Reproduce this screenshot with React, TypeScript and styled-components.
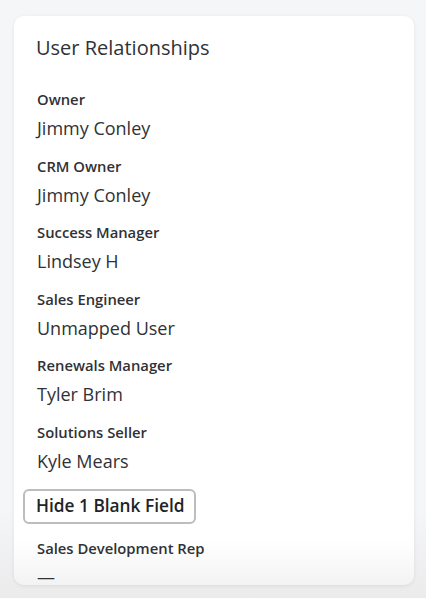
import React from 'react';
import styled, { createGlobalStyle } from 'styled-components';

const GlobalStyle = createGlobalStyle`
  html, body {
    margin: 0;
    padding: 0;
    background: #f4f5f7;
  }
  body {
    font-family: "Open Sans", Lato, Arial, sans-serif;
    color: #2f3033;
  }
`;

const Page = styled.div`
  width: 426px;
  height: 598px;
  padding: 16px 12px 13px 14px;
  box-sizing: border-box;
  background: linear-gradient(#f5f6f8 0%, #f5f6f8 85%, #ebebec 100%);
  overflow: hidden;
`;

const Card = styled.section`
  height: 100%;
  background: linear-gradient(#fff 0, #fff calc(100% - 44px), #f3f3f3 100%);
  border-radius: 10px;
  box-shadow: 0 1px 4px rgba(0, 0, 0, 0.08);
  padding: 20px 22px 0 22px;
  box-sizing: border-box;
  overflow: hidden;
`;

const Title = styled.h2`
  margin: 0 0 30px;
  font-size: 20px;
  font-weight: 400;
  line-height: 24px;
  color: #303236;
`;

const FieldList = styled.div`
  display: flex;
  flex-direction: column;
  gap: 16.5px;
`;

const Field = styled.div`
  display: flex;
  flex-direction: column;
  gap: 8px;
  padding-left: 1px;
`;

const Label = styled.div`
  font-size: 14.8px;
  font-weight: 600;
  line-height: 18px;
  color: #303236;
`;

const Value = styled.div<{ $tight?: boolean }>`
  font-size: 18px;
  line-height: ${(p) => (p.$tight ? '18px' : '24px')};
  margin-top: ${(p) => (p.$tight ? '3px' : '0')};
  color: #303236;
`;

const ToggleButton = styled.button`
  align-self: flex-start;
  margin: -0.5px 0 -1.5px -13px;
  width: 173px;
  height: 35px;
  padding: 0 0 0 11px;
  text-align: left;
  border: 2px solid #bdbdbd;
  border-radius: 6px;
  background: #fff;
  font-family: inherit;
  font-size: 17.3px;
  font-weight: 600;
  line-height: 20px;
  color: #222326;
  white-space: nowrap;
  cursor: pointer;
`;

const fields = [
  { label: 'Owner', value: 'Jimmy Conley' },
  { label: 'CRM Owner', value: 'Jimmy Conley' },
  { label: 'Success Manager', value: 'Lindsey H' },
  { label: 'Sales Engineer', value: 'Unmapped User' },
  { label: 'Renewals Manager', value: 'Tyler Brim' },
  { label: 'Solutions Seller', value: 'Kyle Mears' },
];

export default function App() {
  return (
    <>
      <GlobalStyle />
      <Page>
        <Card>
          <Title>User Relationships</Title>
          <FieldList>
            {fields.map((f) => (
              <Field key={f.label}>
                <Label>{f.label}</Label>
                <Value>{f.value}</Value>
              </Field>
            ))}
            <ToggleButton>Hide 1 Blank Field</ToggleButton>
            <Field>
              <Label>Sales Development Rep</Label>
              <Value $tight>—</Value>
            </Field>
          </FieldList>
        </Card>
      </Page>
    </>
  );
}
